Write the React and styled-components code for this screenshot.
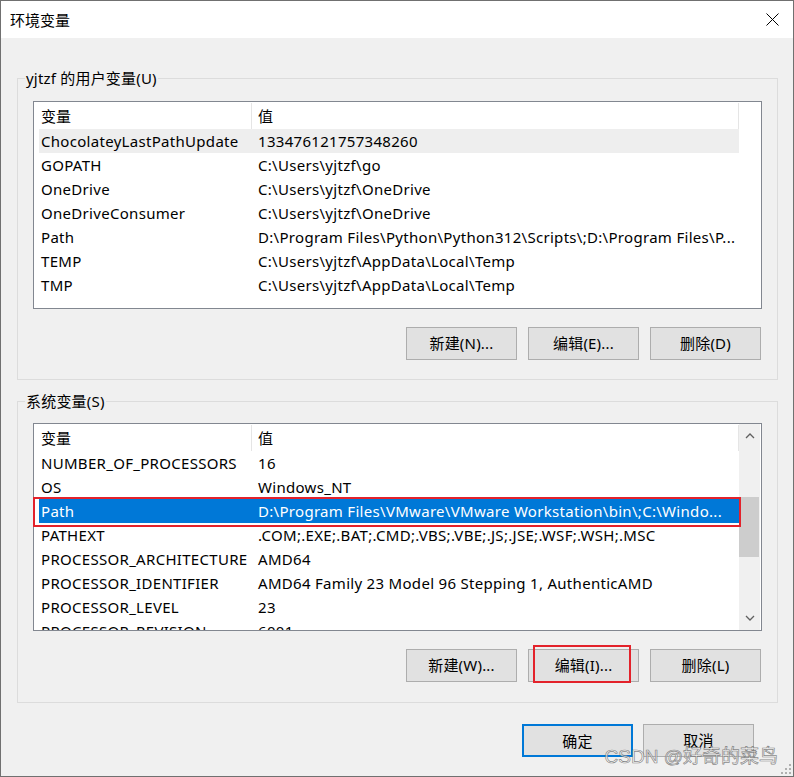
import React from 'react'
import styled, { createGlobalStyle } from 'styled-components'

const GlobalStyle = createGlobalStyle`
html, body {
  margin: 0;
  padding: 0;
  background: #f0f0f0;
}
body {
  font-family: "Noto Sans", "Noto Sans CJK SC", sans-serif;
  font-size: 15px;
  color: #000;
}
`

const Window = styled.div`
position: relative;
display: flex;
flex-direction: column;
width: 794px;
height: 777px;
box-sizing: border-box;
border: 1px solid #707070;
background-color: #f0f0f0;
overflow: hidden;
`

const TitleBar = styled.div`
display: flex;
align-items: center;
height: 37px;
background-color: #fff;
flex-shrink: 0;
`
const Title = styled.div`
flex: 1;
padding-left: 9px;
font-size: 15px;
line-height: 37px;
padding-top: 1px;
`
const CloseButton = styled.div`
width: 42px;
height: 37px;
display: flex;
align-items: center;
justify-content: center;
`

const Body = styled.div`
display: flex;
flex-direction: column;
padding: 29px 15px 0 16px;
`

const GroupBox = styled.fieldset`
margin: ${p => p.$first ? '0' : '10px'} 0 0 0;
padding: 0 15px ${p => p.$bottom}px 15px;
border: 1px solid #dcdcdc;
min-width: 0;
display: flex;
flex-direction: column;
`
const Legend = styled.legend`
margin-left: -8px;
padding: 0 1px;
font-size: 15px;
line-height: 22px;
letter-spacing: 0.2px;
`

const ListBox = styled.div`
margin-top: ${p => p.$top}px;
height: 208px;
box-sizing: border-box;
border: 1px solid #828790;
background-color: #fff;
display: flex;
padding: 0 1px 0 5px;
`
const Table = styled.div`
width: 700px;
display: flex;
flex-direction: column;
`
const HeaderRow = styled.div`
display: grid;
grid-template-columns: 213px 487px;
height: 27px;
`
const HeaderCell = styled.div`
border-right: 1px solid #e5e5e5;
margin: 1px 0;
padding-left: ${p => p.$first ? 2 : 6}px;
line-height: 25px;
padding-top: 1px;
box-sizing: border-box;
`
const Row = styled.div`
position: relative;
display: grid;
grid-template-columns: 213px 487px;
height: ${p => p.$clip ? '11px' : '24px'};
overflow: ${p => p.$clip ? 'hidden' : 'visible'};
background-color: ${p => p.$state === 'selected' ? '#0078d7' : p.$state === 'inactive' ? '#eeeeee' : 'transparent'};
color: ${p => p.$state === 'selected' ? '#fff' : '#000'};
`
const Cell = styled.div`
padding-left: ${p => p.$first ? 2 : 6}px;
line-height: 24px;
letter-spacing: 0.3px;
white-space: nowrap;
overflow: hidden;
`
const Marker = styled.div`
position: absolute;
top: ${p => p.$t}px;
left: ${p => p.$l}px;
right: ${p => p.$r}px;
bottom: ${p => p.$b}px;
border: 2px solid #e3222b;
pointer-events: none;
z-index: 2;
`

const Scrollbar = styled.div`
width: 21px;
display: flex;
flex-direction: column;
background-color: #f0f0f0;
`
const ArrowButton = styled.div`
height: 24px;
display: flex;
align-items: center;
justify-content: center;
`
const Track = styled.div`
flex: 1;
`
const Thumb = styled.div`
margin-top: 49px;
width: 20px;
height: 60px;
background-color: #cdcdcd;
`

const ButtonRow = styled.div`
display: flex;
justify-content: flex-end;
gap: ${p => p.$gap}px;
margin-top: ${p => p.$top}px;
padding-right: ${p => p.$right}px;
`
const ButtonWrap = styled.div`
position: relative;
`
const Button = styled.button`
width: 111px;
height: 33px;
box-sizing: border-box;
border: ${p => p.$default ? '2px solid #0078d7' : '1px solid #adadad'};
background-color: #e1e1e1;
font-family: "Noto Sans", "Noto Sans CJK SC", sans-serif;
font-size: 15px;
letter-spacing: 0.2px;
color: #000;
padding: 0;
line-height: 31px;
`

const Watermark = styled.div`
position: absolute;
right: 15px;
bottom: 7px;
font-family: "Liberation Sans", "Noto Sans CJK SC", sans-serif;
font-size: 19px;
line-height: 24px;
color: rgba(255, 255, 255, 0.7);
-webkit-text-stroke: 0.7px rgba(105, 105, 105, 0.8);
`
const Grip = styled.svg`
position: absolute;
right: 2px;
bottom: 2px;
`

const userVars = [
  ['ChocolateyLastPathUpdate', '133476121757348260', 'inactive'],
  ['GOPATH', 'C:\\Users\\yjtzf\\go'],
  ['OneDrive', 'C:\\Users\\yjtzf\\OneDrive'],
  ['OneDriveConsumer', 'C:\\Users\\yjtzf\\OneDrive'],
  ['Path', 'D:\\Program Files\\Python\\Python312\\Scripts\\;D:\\Program Files\\P...'],
  ['TEMP', 'C:\\Users\\yjtzf\\AppData\\Local\\Temp'],
  ['TMP', 'C:\\Users\\yjtzf\\AppData\\Local\\Temp'],
]

const sysVars = [
  ['NUMBER_OF_PROCESSORS', '16'],
  ['OS', 'Windows_NT'],
  ['Path', 'D:\\Program Files\\VMware\\VMware Workstation\\bin\\;C:\\Windo...', 'selected', true],
  ['PATHEXT', '.COM;.EXE;.BAT;.CMD;.VBS;.VBE;.JS;.JSE;.WSF;.WSH;.MSC'],
  ['PROCESSOR_ARCHITECTURE', 'AMD64'],
  ['PROCESSOR_IDENTIFIER', 'AMD64 Family 23 Model 96 Stepping 1, AuthenticAMD'],
  ['PROCESSOR_LEVEL', '23'],
  ['PROCESSOR_REVISION', '6001', null, false, true],
]

const Chevron = ({ down }) => (
  <svg width="10" height="6" viewBox="0 0 10 6">
    <path d={down ? 'M1 1 L5 5 L9 1' : 'M1 5 L5 1 L9 5'} fill="none" stroke="#606060" strokeWidth="1.3" />
  </svg>
)

const VarList = ({ rows, top, scroll }) => (
  <ListBox $top={top}>
    <Table>
      <HeaderRow>
        <HeaderCell $first>变量</HeaderCell>
        <HeaderCell>值</HeaderCell>
      </HeaderRow>
      {rows.map(([name, value, state, marked, clip]) => (
        <Row key={name} $state={state} $clip={clip}>
          <Cell $first>{name}</Cell>
          <Cell>{value}</Cell>
          {marked && <Marker $t={-2} $l={-6} $r={-2} $b={-4} />}
        </Row>
      ))}
    </Table>
    {scroll && (
      <Scrollbar>
        <ArrowButton><Chevron /></ArrowButton>
        <Track><Thumb /></Track>
        <ArrowButton><Chevron down /></ArrowButton>
      </Scrollbar>
    )}
  </ListBox>
)

const App = () => {
  return (
    <>
      <GlobalStyle />
      <Window>
        <TitleBar>
          <Title>环境变量</Title>
          <CloseButton>
            <svg width="13" height="13" viewBox="0 0 13 13">
              <path d="M0.5 0.5 L12.5 12.5 M12.5 0.5 L0.5 12.5" stroke="#000" strokeWidth="1" />
            </svg>
          </CloseButton>
        </TitleBar>
        <Body>
          <GroupBox $first $bottom={19}>
            <Legend>yjtzf 的用户变量(U)</Legend>
            <VarList rows={userVars} top={12} />
            <ButtonRow $right={1} $gap={11} $top={18}>
              <Button>新建(N)...</Button>
              <Button>编辑(E)...</Button>
              <Button>删除(D)</Button>
            </ButtonRow>
          </GroupBox>
          <GroupBox $bottom={20}>
            <Legend>系统变量(S)</Legend>
            <VarList rows={sysVars} top={11} scroll />
            <ButtonRow $right={1} $gap={11} $top={18}>
              <Button>新建(W)...</Button>
              <ButtonWrap>
                <Button>编辑(I)...</Button>
                <Marker $t={-4} $l={5} $r={8} $b={-1} />
              </ButtonWrap>
              <Button>删除(L)</Button>
            </ButtonRow>
          </GroupBox>
          <ButtonRow $right={24} $gap={10} $top={21}>
            <Button $default>确定</Button>
            <Button>取消</Button>
          </ButtonRow>
        </Body>
        <Watermark>CSDN @好奇的菜鸟</Watermark>
        <Grip width="10" height="10" viewBox="0 0 10 10">
          <rect x="8" y="0" width="2" height="2" fill="#b0b0b0" />
          <rect x="4" y="4" width="2" height="2" fill="#b0b0b0" />
          <rect x="8" y="4" width="2" height="2" fill="#b0b0b0" />
          <rect x="0" y="8" width="2" height="2" fill="#b0b0b0" />
          <rect x="4" y="8" width="2" height="2" fill="#b0b0b0" />
          <rect x="8" y="8" width="2" height="2" fill="#b0b0b0" />
        </Grip>
      </Window>
    </>
  )
}

export default App
